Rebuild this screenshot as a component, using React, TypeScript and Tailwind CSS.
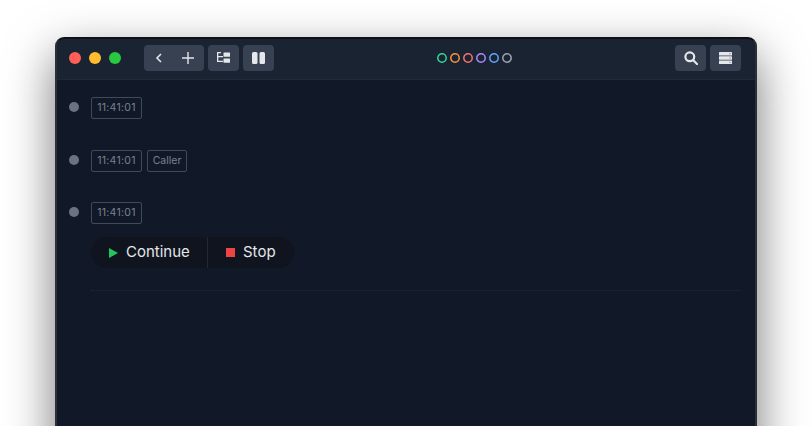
import React from 'react';

const statusRings = ['#34d399', '#fb923c', '#f87171', '#a78bfa', '#60a5fa', '#9ca3af'];

const TimeTag: React.FC<{ label: string; className: string }> = ({ label, className }) => (
  <span className={`flex h-[22px] items-center justify-center rounded-[2px] border border-[#414a58] text-[10.5px] leading-none text-[#7a818e] ${className}`}>
    {label}
  </span>
);

const ToolButton: React.FC<{ children: React.ReactNode }> = ({ children }) => (
  <button className="flex h-[26px] w-[31px] items-center justify-center rounded-[4px] bg-[#374151]">{children}</button>
);

const LogRow: React.FC<{ caller?: boolean; className: string }> = ({ caller, className }) => (
  <div className={`flex items-center ${className}`}>
    <span className="mb-[2px] ml-[12px] h-[10px] w-[10px] rounded-full bg-[#6b7280]" />
    <div className="ml-[12px] flex gap-[5px]">
      <TimeTag label="11:41:01" className="w-[51px] tracking-[0.3px]" />
      {caller && <TimeTag label="Caller" className="w-[40px]" />}
    </div>
  </div>
);

export default function App() {
  return (
    <div className="h-[426px] w-[812px] overflow-hidden bg-white pl-[55px] pt-[37px] font-['Inter',sans-serif]">
      <div className="h-[460px] w-[702px] rounded-t-[9px] border-x-2 border-t-2 border-x-[#2b2f36] border-t-[#111] bg-[#111929] shadow-[0_18px_48px_rgba(0,0,0,0.55)]">
        <header className="flex h-[41px] items-center rounded-t-[7px] border-b border-[#1f2937] bg-[#1a2332] pb-[3px] pl-[12px] pr-[14px]">
          <div className="flex gap-[8px]">
            <span className="h-[12px] w-[12px] rounded-full bg-[#ff5f57]" />
            <span className="h-[12px] w-[12px] rounded-full bg-[#febc2e]" />
            <span className="h-[12px] w-[12px] rounded-full bg-[#28c840]" />
          </div>
          <div className="ml-[23px] flex h-[26px] w-[60px] items-center justify-between rounded-[4px] bg-[#374151] pl-[11px] pr-[10px]">
            <svg width="8" height="10" viewBox="0 0 8 10" fill="none" stroke="#e5e7eb" strokeWidth="1.6">
              <path d="M6 1 2 5l4 4" />
            </svg>
            <svg width="12" height="12" viewBox="0 0 12 12" fill="none" stroke="#e5e7eb" strokeWidth="1.4">
              <path d="M6 0v12M0 6h12" />
            </svg>
          </div>
          <div className="ml-[4px] flex gap-[4px]">
            <ToolButton>
              <svg width="13" height="11" viewBox="0 0 13 11" fill="#e5e7eb">
                <path d="M0 0h4v1.2H1.3v2.9H6v1.2H1.3v3.5H6V10H0z" />
                <rect x="6.5" y="0.5" width="6.5" height="4.2" rx="0.5" />
                <rect x="6.5" y="6.6" width="6.5" height="4.2" rx="0.5" />
              </svg>
            </ToolButton>
            <ToolButton>
              <svg width="13" height="12" viewBox="0 0 13 12" fill="#e5e7eb">
                <rect x="0" y="0" width="5.5" height="12" rx="1.5" />
                <rect x="7.5" y="0" width="5.5" height="12" rx="1.5" />
              </svg>
            </ToolButton>
          </div>
          <div className="flex flex-1 justify-center gap-[3.2px]">
            {statusRings.map((c) => (
              <svg key={c} width="10" height="10" viewBox="0 0 10 10" fill="none" stroke={c} strokeWidth="1.5">
                <circle cx="5" cy="5" r="4.2" />
              </svg>
            ))}
          </div>
          <div className="flex gap-[4px]">
            <ToolButton>
              <svg width="14" height="14" viewBox="0 0 14 14" fill="none" stroke="#e5e7eb" strokeWidth="2.2">
                <circle cx="5.8" cy="5.8" r="4.4" />
                <path d="m9 9 4 4" strokeLinecap="round" />
              </svg>
            </ToolButton>
            <ToolButton>
              <svg width="13" height="12" viewBox="0 0 13 12">
                <rect width="13" height="3.4" rx="0.5" fill="#e5e7eb" />
                <rect y="4.3" width="13" height="3.4" rx="0.5" fill="#e5e7eb" />
                <rect y="8.6" width="13" height="3.4" rx="0.5" fill="#e5e7eb" />
                <circle cx="11" cy="1.7" r="0.6" fill="#6b7280" />
                <circle cx="11" cy="6" r="0.6" fill="#6b7280" />
                <circle cx="11" cy="10.3" r="0.6" fill="#6b7280" />
              </svg>
            </ToolButton>
          </div>
        </header>

        <main>
          <LogRow className="mt-[17px]" />
          <LogRow caller className="mt-[31px]" />
          <LogRow className="mt-[30px]" />
          <div className="ml-[34px] mt-[13px] flex h-[31px] w-[203px] items-center rounded-full bg-[#0f141e] text-[15px] text-[#e5e7eb]">
            <button className="flex h-full w-[117px] items-center border-r border-[#1f2937] pl-[18px]">
              <svg width="9" height="10" viewBox="0 0 9 10" fill="#22c55e">
                <path d="M0 0l9 5-9 5z" />
              </svg>
              <span className="ml-[8px]">Continue</span>
            </button>
            <button className="flex h-full flex-1 items-center pl-[18px]">
              <span className="h-[9px] w-[9px] bg-[#ef4444]" />
              <span className="ml-[8px]">Stop</span>
            </button>
          </div>
          <div className="ml-[34px] mr-[14px] mt-[22px] border-t border-dotted border-[#1f2937]" />
        </main>
      </div>
    </div>
  );
}
